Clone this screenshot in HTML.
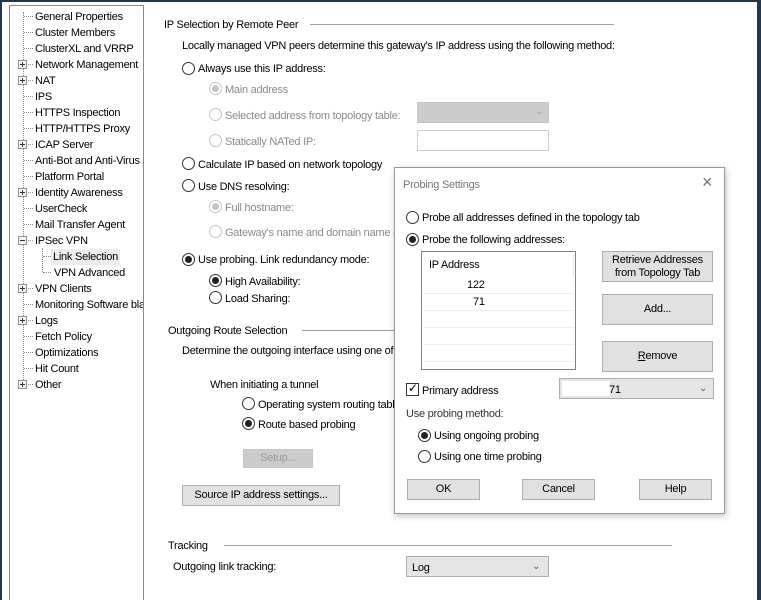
<!DOCTYPE html>
<html><head><style>
*{margin:0;padding:0;box-sizing:border-box}
html,body{width:761px;height:600px;overflow:hidden}
body{background:#fff;font-family:"Liberation Sans",sans-serif;font-size:11px;letter-spacing:-0.25px;color:#000;position:relative}
.a{position:absolute;white-space:nowrap;margin-top:2px}
.navy{background:#24364f;position:absolute}
.tree .t{position:absolute;left:35px;line-height:14px;white-space:nowrap;margin-top:1px}
.pl{position:absolute;width:9px;height:9px;border:1px solid #909090;background:#f4f4f4;left:18px}
.pl:before{content:"";position:absolute;left:1px;top:3px;width:5px;height:1px;background:#333}
.pl.p:after{content:"";position:absolute;left:3px;top:1px;width:1px;height:5px;background:#333}
.dh{position:absolute;border-top:1px dotted #888;height:0}
.dv{position:absolute;border-left:1px dotted #888;width:0}
.r{position:absolute;width:13px;height:13px;border:1px solid #333;border-radius:50%;background:#fff}
.r.on:after{content:"";position:absolute;left:2px;top:2px;width:7px;height:7px;border-radius:50%;background:#222}
.r.dis{border-color:#c4c4c4}
.r.dis.on:after{background:#c4c4c4}
.g{color:#8a8a8a}
.btn{position:absolute;background:#e1e1e1;border:1px solid #adadad;text-align:center;white-space:nowrap}
.line{position:absolute;height:1px;background:#a0a0a0}
</style></head><body>
<div class="navy" style="left:0;top:0;width:761px;height:2px"></div>
<div class="navy" style="left:0;top:0;width:2px;height:600px"></div>
<div class="navy" style="left:757px;top:0;width:4px;height:600px"></div>
<div style="position:absolute;left:9px;top:5px;width:135px;height:595px;border:1px solid #8a8a8a;border-bottom:none"></div>
<div class="tree">
<div class="dv" style="left:23px;top:12px;height:372px"></div>
<div class="dv" style="left:42px;top:248px;height:24px"></div>
<div class="dh" style="left:43px;top:256px;width:8px"></div>
<div class="dh" style="left:43px;top:272px;width:8px"></div>
<div class="dh" style="left:24px;top:16px;width:9px"></div><div class="t" style="top:9px">General Properties</div>
<div class="dh" style="left:24px;top:32px;width:9px"></div><div class="t" style="top:25px">Cluster Members</div>
<div class="dh" style="left:24px;top:48px;width:9px"></div><div class="t" style="top:41px">ClusterXL and VRRP</div>
<div class="pl p" style="top:60px"></div><div class="dh" style="left:28px;top:64px;width:5px"></div><div class="t" style="top:57px">Network Management</div>
<div class="pl p" style="top:76px"></div><div class="dh" style="left:28px;top:80px;width:5px"></div><div class="t" style="top:73px">NAT</div>
<div class="dh" style="left:24px;top:96px;width:9px"></div><div class="t" style="top:89px">IPS</div>
<div class="dh" style="left:24px;top:112px;width:9px"></div><div class="t" style="top:105px">HTTPS Inspection</div>
<div class="dh" style="left:24px;top:128px;width:9px"></div><div class="t" style="top:121px">HTTP/HTTPS Proxy</div>
<div class="pl p" style="top:140px"></div><div class="dh" style="left:28px;top:144px;width:5px"></div><div class="t" style="top:137px">ICAP Server</div>
<div class="dh" style="left:24px;top:160px;width:9px"></div><div class="t" style="top:153px">Anti-Bot and Anti-Virus</div>
<div class="dh" style="left:24px;top:176px;width:9px"></div><div class="t" style="top:169px">Platform Portal</div>
<div class="pl p" style="top:188px"></div><div class="dh" style="left:28px;top:192px;width:5px"></div><div class="t" style="top:185px">Identity Awareness</div>
<div class="dh" style="left:24px;top:208px;width:9px"></div><div class="t" style="top:201px">UserCheck</div>
<div class="dh" style="left:24px;top:224px;width:9px"></div><div class="t" style="top:217px">Mail Transfer Agent</div>
<div class="pl" style="top:236px"></div><div class="dh" style="left:28px;top:240px;width:5px"></div><div class="t" style="top:233px">IPSec VPN</div>
<div class="t" style="top:248px;left:51px;background:#ececec;padding:1px 2px;line-height:14px">Link Selection</div>
<div class="t" style="top:265px;left:54px">VPN Advanced</div>
<div class="pl p" style="top:284px"></div><div class="dh" style="left:28px;top:288px;width:5px"></div><div class="t" style="top:281px">VPN Clients</div>
<div class="dh" style="left:24px;top:304px;width:9px"></div><div class="t" style="top:297px;width:108px;overflow:hidden">Monitoring Software blades</div>
<div class="pl p" style="top:316px"></div><div class="dh" style="left:28px;top:320px;width:5px"></div><div class="t" style="top:313px">Logs</div>
<div class="dh" style="left:24px;top:336px;width:9px"></div><div class="t" style="top:329px">Fetch Policy</div>
<div class="dh" style="left:24px;top:352px;width:9px"></div><div class="t" style="top:345px">Optimizations</div>
<div class="dh" style="left:24px;top:368px;width:9px"></div><div class="t" style="top:361px">Hit Count</div>
<div class="pl p" style="top:380px"></div><div class="dh" style="left:28px;top:384px;width:5px"></div><div class="t" style="top:377px">Other</div>
</div>

<!-- main -->
<div class="a" style="left:164px;top:17px">IP Selection by Remote Peer</div>
<div class="line" style="left:310px;top:24px;width:304px"></div>
<div class="a" style="left:182px;top:38px">Locally managed VPN peers determine this gateway's IP address using the following method:</div>
<div class="r" style="left:182px;top:62px"></div><div class="a" style="left:198px;top:61px">Always use this IP address:</div>
<div class="r dis on" style="left:209px;top:82px"></div><div class="a g" style="left:225px;top:82px">Main address</div>
<div class="r dis" style="left:209px;top:108px"></div><div class="a g" style="left:225px;top:108px">Selected address from topology table:</div>
<div style="position:absolute;left:417px;top:102px;width:132px;height:21px;background:#ccc;border:1px solid #c4c4c4"></div>
<div class="a" style="left:535px;top:104px;color:#999;font-size:10px">&#8964;</div>
<div class="r dis" style="left:209px;top:134px"></div><div class="a g" style="left:225px;top:134px">Statically NATed IP:</div>
<div style="position:absolute;left:417px;top:130px;width:132px;height:21px;border:1px solid #ccc"></div>
<div class="r" style="left:182px;top:157px"></div><div class="a" style="left:198px;top:157px">Calculate IP based on network topology</div>
<div class="r" style="left:182px;top:179px"></div><div class="a" style="left:198px;top:179px">Use DNS resolving:</div>
<div class="r dis on" style="left:209px;top:200px"></div><div class="a g" style="left:225px;top:200px">Full hostname:</div>
<div class="r dis" style="left:209px;top:225px"></div><div class="a g" style="left:225px;top:225px">Gateway's name and domain name (</div>
<div class="r on" style="left:182px;top:253px"></div><div class="a" style="left:198px;top:252px">Use probing. Link redundancy mode:</div>
<div class="r on" style="left:209px;top:274px"></div><div class="a" style="left:225px;top:274px">High Availability:</div>
<div class="r" style="left:209px;top:291px"></div><div class="a" style="left:225px;top:291px">Load Sharing:</div>
<div class="a" style="left:168px;top:323px">Outgoing Route Selection</div>
<div class="line" style="left:302px;top:330px;width:100px"></div>
<div class="a" style="left:182px;top:343px">Determine the outgoing interface using one of</div>
<div class="a" style="left:210px;top:377px">When initiating a tunnel</div>
<div class="r" style="left:242px;top:397px"></div><div class="a" style="left:258px;top:397px">Operating system routing table</div>
<div class="r on" style="left:242px;top:417px"></div><div class="a" style="left:258px;top:417px">Route based probing</div>
<div class="btn" style="left:243px;top:449px;width:70px;height:19px;color:#999;background:#ccc;border-color:#c4c4c4;line-height:17px">Setup...</div>
<div class="btn" style="left:182px;top:485px;width:158px;height:21px;line-height:19px">Source IP address settings...</div>
<div class="a" style="left:168px;top:538px">Tracking</div>
<div class="line" style="left:224px;top:545px;width:448px"></div>
<div class="a" style="left:173px;top:559px">Outgoing link tracking:</div>
<div style="position:absolute;left:406px;top:556px;width:143px;height:21px;background:#e5e5e5;border:1px solid #adadad"></div>
<div class="a" style="left:412px;top:560px">Log</div>
<div class="a" style="left:532px;top:559px;color:#555;font-size:10px">&#8964;</div>

<!-- dialog -->
<div style="position:absolute;left:394px;top:167px;width:331px;height:347px;background:#fff;border:1px solid #9a9a9a;box-shadow:1px 2px 6px rgba(0,0,0,.25)">
<div class="a" style="left:8px;top:9px;color:#777">Probing Settings</div>
<div class="a" style="left:307px;top:2px;font-size:18px;color:#777">&#215;</div>
<div class="r" style="left:11px;top:43px"></div><div class="a" style="left:27px;top:42px">Probe all addresses defined in the topology tab</div>
<div class="r on" style="left:11px;top:65px"></div><div class="a" style="left:27px;top:64px">Probe the following addresses:</div>
<div style="position:absolute;left:26px;top:83px;width:155px;height:119px;border:1px solid #828282">
<div class="a" style="left:7px;top:5px">IP Address</div>
<div style="position:absolute;left:151px;top:2px;width:1px;height:22px;background:#e5e5e5"></div>
<div class="a" style="left:45px;top:25px">122</div>
<div class="a" style="left:51px;top:42px">71</div>
<div style="position:absolute;left:1px;top:41px;width:151px;height:1px;background:#eee"></div>
<div style="position:absolute;left:1px;top:58px;width:151px;height:1px;background:#eee"></div>
<div style="position:absolute;left:1px;top:75px;width:151px;height:1px;background:#eee"></div>
<div style="position:absolute;left:1px;top:92px;width:151px;height:1px;background:#eee"></div>
<div style="position:absolute;left:1px;top:109px;width:151px;height:1px;background:#eee"></div>
</div>
<div class="btn" style="left:207px;top:83px;width:111px;height:31px;line-height:13px;padding-top:2px">Retrieve Addresses<br>from Topology Tab</div>
<div class="btn" style="left:207px;top:126px;width:111px;height:31px;line-height:29px">Add...</div>
<div class="btn" style="left:207px;top:173px;width:111px;height:31px;line-height:29px"><u>R</u>emove</div>
<div style="position:absolute;left:11px;top:215px;width:13px;height:13px;border:1px solid #333"></div>
<div class="a" style="left:13px;top:211px;font-size:12px">&#10003;</div>
<div class="a" style="left:27px;top:215px">Primary address</div>
<div style="position:absolute;left:164px;top:210px;width:155px;height:21px;background:#e5e5e5;border:1px solid #adadad"></div>
<div style="position:absolute;left:167px;top:213px;width:48px;height:15px;background:#fff"></div>
<div class="a" style="left:214px;top:214px">71</div>
<div class="a" style="left:304px;top:213px;color:#555;font-size:10px">&#8964;</div>
<div class="a" style="left:11px;top:238px;color:#333">Use probing method:</div>
<div class="r on" style="left:23px;top:261px"></div><div class="a" style="left:39px;top:260px">Using ongoing probing</div>
<div class="r" style="left:23px;top:282px"></div><div class="a" style="left:39px;top:281px">Using one time probing</div>
<div class="btn" style="left:12px;top:311px;width:73px;height:21px;line-height:19px">OK</div>
<div class="btn" style="left:127px;top:311px;width:73px;height:21px;line-height:19px">Cancel</div>
<div class="btn" style="left:244px;top:311px;width:73px;height:21px;line-height:19px">Help</div>
</div>
</body></html>
